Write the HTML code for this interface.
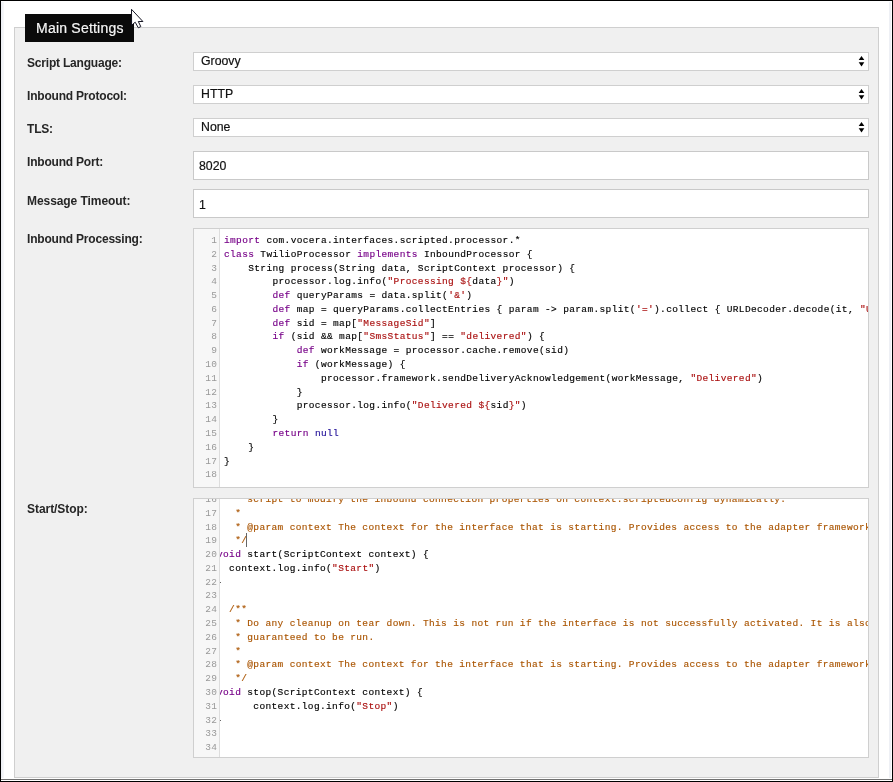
<!DOCTYPE html>
<html><head><meta charset="utf-8">
<style>
html,body{margin:0;padding:0;}
body{width:893px;height:782px;overflow:hidden;position:relative;background:#fff;font-family:"Liberation Sans",sans-serif;}
.abs{position:absolute;}
#frame{position:absolute;left:0;top:0;width:891px;height:780px;border:1px solid #000;box-sizing:content-box;}
#stripeL{position:absolute;left:1px;top:2px;width:3px;height:776px;background:linear-gradient(to right,#eceef3,#f7f8fa);}
#stripeR{position:absolute;left:889px;top:2px;width:2px;height:776px;background:#eef0f5;}
#bline{position:absolute;left:1px;top:779px;width:891px;height:1px;background:#6f6f6f;}
#panel{position:absolute;left:14px;top:27px;width:863px;height:749px;background:#f0f0f0;border:1px solid #cfcfcf;}
#tab{position:absolute;left:25px;top:14px;width:109px;height:28px;background:#0a0a0a;color:#f6f6f6;font-size:14px;line-height:28px;letter-spacing:0.22px;-webkit-text-stroke:0.2px #f6f6f6;}
#tab span{position:absolute;will-change:transform;left:11px;top:0;}
.lbl{position:absolute;will-change:transform;left:27px;font-weight:bold;font-size:12px;color:#262626;letter-spacing:-0.2px;white-space:nowrap;line-height:14px;}
.sel{position:absolute;left:193px;width:674px;height:17px;background:#fff;border:1px solid #cfcfcf;}
.sel span{position:absolute;will-change:transform;left:7px;top:1px;font-size:12.3px;-webkit-text-stroke:0.2px #111;color:#111;line-height:15px;}
.inp{position:absolute;left:193px;width:674px;background:#fff;border:1px solid #c9c9c9;}
.inp span{position:absolute;will-change:transform;left:5px;font-size:12.3px;-webkit-text-stroke:0.2px #111;color:#111;line-height:15px;}
.arr{position:absolute;left:665px;top:3px;width:7px;height:11px;}
.ed{position:absolute;left:193px;width:674px;background:#fff;border:1px solid #cfcfcf;overflow:hidden;}
.gut{position:absolute;left:0;top:0;width:25px;bottom:0;background:#f7f7f7;border-right:1px solid #dddddd;}
.code{position:absolute;left:26px;top:0;right:0;bottom:0;overflow:hidden;}
.ln{position:absolute;left:0;width:23.3px;text-align:right;font-family:"Liberation Mono",monospace;font-size:9.5px;letter-spacing:0.3px;color:#999;-webkit-text-stroke:0;white-space:pre;}
pre{margin:0;position:absolute;will-change:transform;font-family:"Liberation Mono",monospace;font-size:9.5px;letter-spacing:0.356px;-webkit-text-stroke:0.15px currentColor;line-height:13.78px;color:#000;white-space:pre;}
.k{color:#770088;}
.s{color:#aa1111;}
.a{color:#221199;}
.c{color:#aa5500;}
</style></head><body>
<div id="frame"></div>
<div id="stripeL"></div>
<div id="stripeR"></div>
<div id="bline"></div>
<div id="panel"></div>
<div id="tab"><span>Main Settings</span></div>

<div class="lbl" style="top:56px">Script Language:</div>
<div class="lbl" style="top:89px">Inbound Protocol:</div>
<div class="lbl" style="top:122px">TLS:</div>
<div class="lbl" style="top:155px">Inbound Port:</div>
<div class="lbl" style="top:194px;letter-spacing:-0.07px">Message Timeout:</div>
<div class="lbl" style="top:232px">Inbound Processing:</div>
<div class="lbl" style="top:502px;letter-spacing:-0.05px">Start/Stop:</div>

<div class="sel" style="top:52px"><span>Groovy</span></div>
<div class="sel" style="top:85px"><span>HTTP</span></div>
<div class="sel" style="top:118px"><span>None</span></div>

<div class="inp" style="top:151px;height:27px"><span style="top:7px">8020</span></div>
<div class="inp" style="top:189px;height:27px"><span style="top:8px">1</span></div>

<div class="ed" style="top:228px;height:258px">
  <div class="gut"><pre class="ln" id="ln1" style="top:5px">1
2
3
4
5
6
7
8
9
10
11
12
13
14
15
16
17
18</pre></div>
  <div class="code"><pre id="c1" style="left:4px;top:5px"><span class="k">import</span> com.vocera.interfaces.scripted.processor.*
<span class="k">class</span> TwilioProcessor <span class="k">implements</span> InboundProcessor {
    String process(String data, ScriptContext processor) {
        processor.log.info(<span class="s">"Processing ${</span>data<span class="s">}"</span>)
        <span class="k">def</span> queryParams = data.split(<span class="s">'&amp;'</span>)
        <span class="k">def</span> map = queryParams.collectEntries { param -&gt; param.split(<span class="s">'='</span>).collect { URLDecoder.decode(it, <span class="s">"UTF-8"</span>) } }
        <span class="k">def</span> sid = map[<span class="s">"MessageSid"</span>]
        <span class="k">if</span> (sid &amp;&amp; map[<span class="s">"SmsStatus"</span>] == <span class="s">"delivered"</span>) {
            <span class="k">def</span> workMessage = processor.cache.remove(sid)
            <span class="k">if</span> (workMessage) {
                processor.framework.sendDeliveryAcknowledgement(workMessage, <span class="s">"Delivered"</span>)
            }
            processor.log.info(<span class="s">"Delivered ${</span>sid<span class="s">}"</span>)
        }
        <span class="k">return</span> <span class="a">null</span>
    }
}
</pre></div>
</div>
<div class="ed" style="top:498px;height:258px">
  <div class="gut"><pre class="ln" id="ln2" style="top:-5.7px">16
17
18
19
20
21
22
23
24
25
26
27
28
29
30
31
32
33
34</pre></div>
  <div class="code"><pre id="c2" style="left:-3.5px;top:-5.7px"><span class="c">   * script to modify the inbound connection properties on context.scriptedConfig dynamically.</span>
<span class="c">   *</span>
<span class="c">   * @param context The context for the interface that is starting. Provides access to the adapter framework and logging.</span>
<span class="c">   */</span>
<span class="k">void</span> start(ScriptContext context) {
  context.log.info(<span class="s">"Start"</span>)
 

<span class="c">  /**</span>
<span class="c">   * Do any cleanup on tear down. This is not run if the interface is not successfully activated. It is also not</span>
<span class="c">   * guaranteed to be run.</span>
<span class="c">   *</span>
<span class="c">   * @param context The context for the interface that is starting. Provides access to the adapter framework and logging.</span>
<span class="c">   */</span>
<span class="k">void</span> stop(ScriptContext context) {
      context.log.info(<span class="s">"Stop"</span>)
 


</pre></div>
</div>

<div class="abs" style="left:246px;top:533px;width:1px;height:14px;background:#666"></div>
<div class="abs" style="left:220px;top:582px;width:1.3px;height:1.3px;background:#333;border-radius:1px"></div>
<div class="abs" style="left:220px;top:720px;width:1.3px;height:1.3px;background:#333;border-radius:1px"></div>
<svg class="abs" style="left:0;top:0" width="893" height="782" viewBox="0 0 893 782">
<g fill="#000">
<path d="M861.5 56 L864.3 60 L858.7 60 Z"/><path d="M858.7 62.3 L864.3 62.3 L861.5 66.5 Z"/>
<path d="M861.5 89 L864.3 93 L858.7 93 Z"/><path d="M858.7 95.3 L864.3 95.3 L861.5 99.5 Z"/>
<path d="M861.5 122 L864.3 126 L858.7 126 Z"/><path d="M858.7 128.3 L864.3 128.3 L861.5 132.5 Z"/>
</g>
<path d="M131.5 9.3 L131.6 25.3 L135.2 22.2 L138.3 27.8 L140.8 26.6 L138.3 21.5 L142.9 21.5 Z" fill="#fff" stroke="#0a0a18" stroke-width="0.95" stroke-linejoin="miter"/>
</svg>
</body></html>
